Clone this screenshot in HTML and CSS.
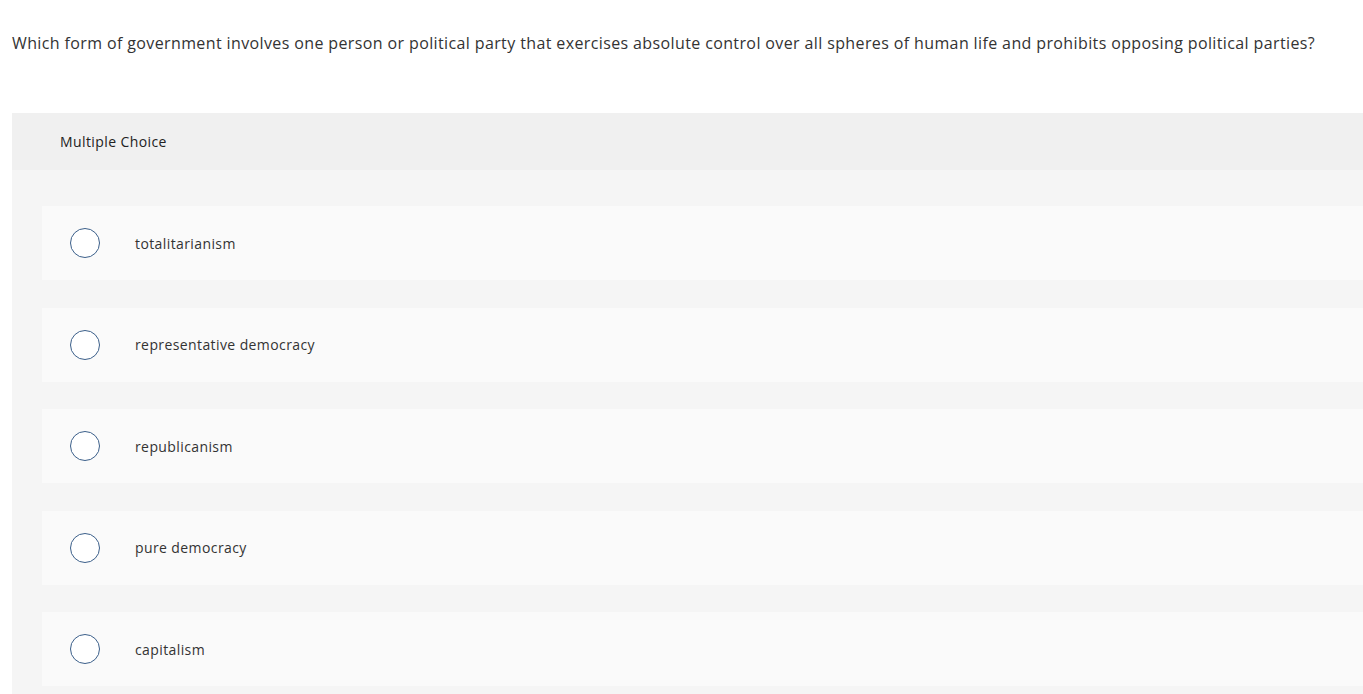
FILE: index.html
```html
<!DOCTYPE html>
<html lang="en">
<head>
<meta charset="utf-8">
<title>Multiple Choice</title>
<link rel="stylesheet" href="styles.css">
</head>
<body>
<div class="page">
  <p class="question">Which form of government involves one person or political party that exercises absolute control over all spheres of human life and prohibits opposing political parties?</p>
  <section class="panel">
    <header class="panel-head">Multiple Choice</header>
    <div class="panel-body">
      <label class="option"><span class="radio"></span><span class="label">totalitarianism</span></label>
      <label class="option"><span class="radio"></span><span class="label">representative democracy</span></label>
      <label class="option"><span class="radio"></span><span class="label">republicanism</span></label>
      <label class="option"><span class="radio"></span><span class="label">pure democracy</span></label>
      <label class="option"><span class="radio"></span><span class="label">capitalism</span></label>
    </div>
  </section>
</div>
</body>
</html>
```
FILE: styles.css
```css
html, body {
  margin: 0;
  padding: 0;
  background: #ffffff;
  overflow: hidden;
}
body {
  font-family: "Open Sans", Lato, "Liberation Sans", sans-serif;
  color: #333333;
}
.page {
  padding: 31px 0 0 12px;
}
.question {
  margin: 0;
  font-size: 16px;
  line-height: 24px;
  letter-spacing: 0.38px;
  color: #333333;
  white-space: nowrap;
}
.panel {
  margin-top: 58px;
  background: #f5f5f5;
}
.panel-head {
  height: 57px;
  background: #f0f0f0;
  display: flex;
  align-items: center;
  padding-left: 48px;
  font-size: 14px;
  letter-spacing: 0.4px;
  color: #222222;
}
.panel-body {
  padding: 36px 0 20px 30px;
  display: flex;
  flex-direction: column;
  gap: 27.5px;
}
.option {
  height: 74px;
  background: #fafafa;
  display: flex;
  align-items: center;
  padding-left: 28px;
  font-size: 14px;
  letter-spacing: 0.4px;
  color: #333333;
}
.radio {
  width: 28px;
  height: 28px;
  border: 1.3px solid #3b5f8a;
  border-radius: 50%;
  background: #ffffff;
  flex: none;
  margin-right: 35px;
}
```
